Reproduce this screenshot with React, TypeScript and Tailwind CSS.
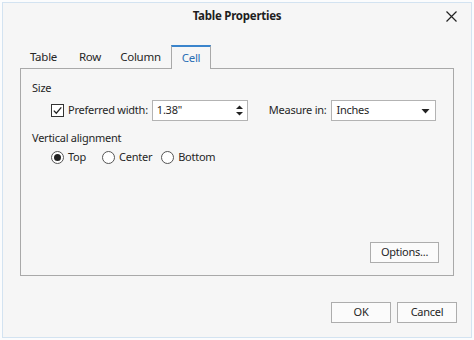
import React from "react";

const font = { fontFamily: '"Noto Sans", "Open Sans", sans-serif' };

function Checkbox() {
  return (
    <div className="shrink-0 w-[13px] h-[13px] border border-[#333] bg-white flex items-center justify-center">
      <svg width="11" height="11" viewBox="0 0 11 11">
        <path d="M1.8 5.6 L4.3 8.2 L9.3 2.4" fill="none" stroke="#222" strokeWidth="1.3" />
      </svg>
    </div>
  );
}

function Radio({ checked }: { checked?: boolean }) {
  return (
    <div className="shrink-0 w-[13px] h-[13px] rounded-full border border-[#555] bg-white flex items-center justify-center">
      {checked && <div className="w-[7px] h-[7px] rounded-full bg-[#222]" />}
    </div>
  );
}

export default function App() {
  return (
    <div
      className="w-[474px] h-[340px] bg-[#fbfcfd] p-[2px] text-[11px] tracking-[-0.25px] text-[#262626] whitespace-nowrap"
      style={font}
    >
      <div className="w-full h-full border border-[#d3e3f1] bg-[#f6f6f6] flex flex-col">
        {/* title bar */}
        <div className="h-[25px] flex items-center relative">
          <div className="flex-1 text-center font-bold text-[11.5px] text-[#1e1e1e]">
            Table Properties
          </div>
          <svg
            className="absolute right-[14px] top-[8px]"
            width="11"
            height="11"
            viewBox="0 0 11 11"
          >
            <path d="M0.5 0.5 L10.5 10.5 M10.5 0.5 L0.5 10.5" stroke="#222" strokeWidth="1.2" />
          </svg>
        </div>

        {/* tabs */}
        <div className="mt-[17px] h-[23px] flex items-end pl-[17px] text-[11.5px]">
          <div className="w-[47px] h-[23px] pt-[1px] flex items-center justify-center">Table</div>
          <div className="w-[46px] h-[23px] pt-[1px] flex items-center justify-center">Row</div>
          <div className="w-[55px] h-[23px] pt-[1px] flex items-center justify-center">Column</div>
          <div className="ml-[3px] w-[40px] h-[24px] mb-[-1px] border-t-2 border-t-[#3a84cc] border-l border-r border-[#a9a9a9] bg-[#f6f6f6] flex items-center justify-center text-[#2a6fb5] relative z-10">
            Cell
          </div>
        </div>

        {/* panel */}
        <div className="ml-[17px] w-[434px] h-[208px] border border-[#a9a9a9] flex flex-col pl-[11px] pt-[10px] pr-[14px] pb-[12px]">
          <div className="h-[17px] leading-[17px]">Size</div>
          <div className="mt-[4px] h-[21px] flex items-center">
            <div className="ml-[19px]">
              <Checkbox />
            </div>
            <span className="ml-[4px] shrink-0">Preferred width:</span>
            <div className="ml-[4px] shrink-0 w-[96px] h-[21px] border border-[#b3b3b3] bg-white flex items-center pl-[4px] pr-[3px]">
              <span className="flex-1">1.38"</span>
              <svg width="9" height="13" viewBox="0 0 9 13">
                <path d="M1 5 L4.5 1.5 L8 5 Z" fill="#222" />
                <path d="M1 8 L4.5 11.5 L8 8 Z" fill="#222" />
              </svg>
            </div>
            <span className="ml-[21px] shrink-0">Measure in:</span>
            <div className="ml-[5px] shrink-0 w-[105px] h-[21px] border border-[#b3b3b3] bg-white flex items-center pl-[4px] pr-[5px]">
              <span className="flex-1">Inches</span>
              <svg width="9" height="6" viewBox="0 0 9 6">
                <path d="M0.5 1 L8.5 1 L4.5 5.5 Z" fill="#222" />
              </svg>
            </div>
          </div>
          <div className="mt-[8px] h-[17px] leading-[17px]">Vertical alignment</div>
          <div className="mt-[3px] h-[17px] flex items-center">
            <div className="ml-[19px]">
              <Radio checked />
            </div>
            <span className="ml-[4px]">Top</span>
            <div className="ml-[16px]">
              <Radio />
            </div>
            <span className="ml-[4px]">Center</span>
            <div className="ml-[9px]">
              <Radio />
            </div>
            <span className="ml-[4px]">Bottom</span>
          </div>
          <div className="flex-1" />
          <div className="flex justify-end">
            <div className="w-[69px] h-[21px] border border-[#adadad] bg-[#fbfbfb] flex items-center justify-center">
              Options...
            </div>
          </div>
        </div>

        {/* bottom buttons */}
        <div className="mt-[26px] flex justify-end pr-[14px] gap-[6px]">
          <div className="w-[60px] h-[21px] border border-[#adadad] bg-[#fbfbfb] flex items-center justify-center">
            OK
          </div>
          <div className="w-[60px] h-[21px] border border-[#adadad] bg-[#fbfbfb] flex items-center justify-center">
            Cancel
          </div>
        </div>
      </div>
    </div>
  );
}
